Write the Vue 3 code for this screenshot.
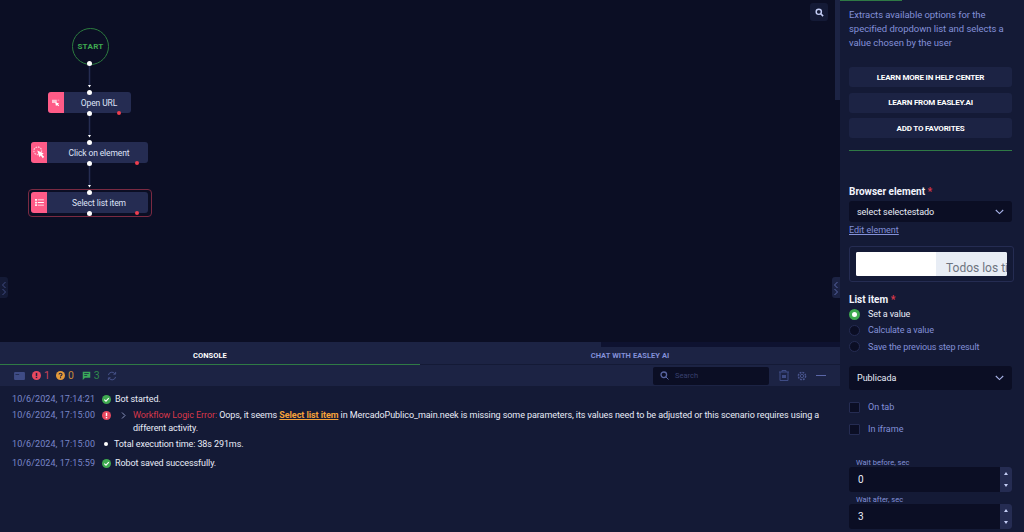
<script setup>
const rows = [
  { time: '10/6/2024, 17:14:21', icon: 'ok', text: 'Bot started.' },
  { time: '10/6/2024, 17:15:00', icon: 'err' },
  { time: '10/6/2024, 17:15:00', icon: 'dot', text: 'Total execution time: 38s 291ms.' },
  { time: '10/6/2024, 17:15:59', icon: 'ok', text: 'Robot saved successfully.' },
]
</script>

<template>
  <div class="app">
    <div class="left">
      <div class="canvas">
        <div class="vbar"></div>
        <button class="zoom-btn" aria-label="Search">
          <svg width="9" height="9" viewBox="0 0 10 10"><circle cx="4.2" cy="4.2" r="2.9" fill="none" stroke="#c4cdf5" stroke-width="1.6"/><path d="M6.4 6.4 9 9" stroke="#c4cdf5" stroke-width="1.8"/></svg>
        </button>
        <div class="handle handle-l"><svg width="6" height="14" viewBox="0 0 6 14"><path d="M4.500 1 1.500 4l3 3M1.500 8l3 3-3 3" fill="none" stroke="#3f4a80"/></svg></div>
        <div class="handle handle-r"><svg width="6" height="14" viewBox="0 0 6 14"><path d="M4.500 1 1.500 4l3 3M1.500 8l3 3-3 3" fill="none" stroke="#5a66a6"/></svg></div>

        <svg class="wires" width="180" height="230" viewBox="0 0 180 230">
          <path d="M89.500 63V86M89.500 113V135M89.500 163V185" stroke="#252c52" stroke-width="1.500"/>
          <path d="M88 85h3l-1.500 2.500zM88 135h3l-1.500 2.500zM88 185h3l-1.500 2.500z" fill="#fff"/>
        </svg>

        <div class="start">START</div>
        <i class="port" style="left:87px;top:61px"></i>

        <div class="node n1">
          <span class="node-icon">
            <svg width="8" height="8" viewBox="0 0 10 10"><path d="M0 1h6v4H0zM7 1h2v1H7z" fill="#ffc3d4"/><path d="M4 4l1 5 1.200-1.500L8 9l1-1-1.500-1.500L9 5.500z" fill="#fff"/></svg>
          </span>
          <span class="node-label">Open URL</span>
        </div>
        <i class="port" style="left:87px;top:90px"></i>
        <i class="port" style="left:87px;top:111px"></i>
        <i class="red" style="left:117px;top:111px"></i>

        <div class="node n2">
          <span class="node-icon">
            <svg width="12" height="14" viewBox="0 0 14 16"><circle cx="5.500" cy="5.500" r="4.500" fill="none" stroke="#ffc3d4" stroke-width="1.500" stroke-dasharray="2 1"/><path d="M5 5l2.500 8 1.500-2 2.500 3 1.500-1.500-2.500-2.500 2-1.500z" fill="#fff"/></svg>
          </span>
          <span class="node-label">Click on element</span>
        </div>
        <i class="port" style="left:87px;top:140px"></i>
        <i class="port" style="left:87px;top:161px"></i>
        <i class="red" style="left:135px;top:161px"></i>

        <div class="selected">
          <div class="node n3">
            <span class="node-icon">
              <svg width="9" height="7" viewBox="0 0 10 8"><path d="M0 0h2v2H0zM3 .5h7v1H3zM0 3h2v2H0zM3 3.500h7v1H3zM0 6h2v2H0zM3 6.500h7v1H3z" fill="#fff"/></svg>
            </span>
            <span class="node-label">Select list item</span>
          </div>
        </div>
        <i class="port" style="left:87px;top:190px"></i>
        <i class="port" style="left:87px;top:211px"></i>
        <i class="red" style="left:135px;top:211px"></i>
      </div>

      <div class="hbar-track"><div class="hbar"></div></div>

      <div class="tabs">
        <div class="tab active">CONSOLE</div>
        <div class="tab">CHAT WITH EASLEY AI</div>
      </div>

      <div class="toolbar">
        <svg class="t-ic" width="11" height="8" viewBox="0 0 15 11"><rect width="15" height="11" rx="1.500" fill="#3f4c85"/><rect x="2" y="3" width="5" height="1" fill="#1c2344"/></svg>
        <span class="stat red-t">
          <svg viewBox="0 0 12 12"><circle cx="6" cy="6" r="6" fill="#e8485f"/><rect x="5" y="2.500" width="2" height="4.500" fill="#1c2344"/><rect x="5" y="8" width="2" height="1.500" fill="#1c2344"/></svg>1
        </span>
        <span class="stat orange-t">
          <svg viewBox="0 0 12 12"><circle cx="6" cy="6" r="6" fill="#e39a3b"/><path d="M4 4.800C4 2.500 8 2.500 8 4.600 8 6 6 5.800 6 7.200" fill="none" stroke="#1c2344" stroke-width="1.400"/><rect x="5.300" y="8.200" width="1.500" height="1.500" fill="#1c2344"/></svg>0
        </span>
        <span class="stat green-t">
          <svg viewBox="0 0 12 12"><path d="M1 1h10v8H4l-3 3z" fill="#39a85a"/><rect x="3" y="3" width="6" height="1" fill="#1c2344"/><rect x="3" y="5.500" width="4" height="1" fill="#1c2344"/></svg>3
        </span>
        <svg class="sync" width="10" height="10" viewBox="0 0 11 11"><path d="M1.500 4.500a4 4 0 0 1 7.200-1.500M9.500 6.500A4 4 0 0 1 2.300 8" fill="none" stroke="#4a5690"/><path d="M9.500 1v2.500H7M1.500 10V7.500H4" fill="none" stroke="#4a5690"/></svg>
        <div class="search">
          <svg width="9" height="9" viewBox="0 0 9 9"><circle cx="3.800" cy="3.800" r="2.800" fill="none" stroke="#58649f" stroke-width="1.300"/><path d="M6 6l2.500 2.500" stroke="#58649f"/></svg>
          <span>Search</span>
        </div>
        <svg class="trash" width="10" height="11" viewBox="0 0 10 11"><path d="M0 2h10M3 2V.5h4V2M1 2v8.500h8V2" fill="none" stroke="#3f4c85"/><rect x="3" y="5" width="4" height="3" fill="#3f4c85"/></svg>
        <svg class="gear" width="10" height="10" viewBox="0 0 11 11"><circle cx="5.500" cy="5.500" r="1.800" fill="none" stroke="#4a5690"/><circle cx="5.500" cy="5.500" r="4" fill="none" stroke="#4a5690" stroke-width="1.600" stroke-dasharray="2 1.140"/></svg>
        <span class="dash"></span>
      </div>

      <div class="log">
        <div v-for="(r, i) in rows" :key="i" class="row" :class="'row' + i">
          <span class="time">{{ r.time }}</span>
          <svg v-if="r.icon === 'ok'" class="ric" width="9" height="9" viewBox="0 0 9 9"><circle cx="4.500" cy="4.500" r="4.500" fill="#3fa950"/><path d="M2.300 4.600 4 6.200l2.800-3" fill="none" stroke="#fff" stroke-width="1.100"/></svg>
          <svg v-else-if="r.icon === 'err'" class="ric" width="9" height="9" viewBox="0 0 9 9"><circle cx="4.500" cy="4.500" r="4.500" fill="#e8485f"/><rect x="3.800" y="1.800" width="1.400" height="3.400" fill="#fff"/><rect x="3.800" y="6" width="1.400" height="1.300" fill="#fff"/></svg>
          <span v-else class="ric dot"></span>
          <template v-if="r.icon === 'err'">
            <svg class="chev" width="5" height="7" viewBox="0 0 5 7"><path d="M1 .5 4 3.500 1 6.500" fill="none" stroke="#8a93bd"/></svg>
            <p class="msg err"><span class="err-t">Workflow Logic Error:</span> Oops, it seems <a>Select list item</a> in MercadoPublico_main.neek is missing some parameters, its values need to be adjusted or this scenario requires using a different activity.</p>
          </template>
          <p v-else class="msg">{{ r.text }}</p>
        </div>
      </div>
    </div>

    <aside class="panel">
      <div class="panel-tab"></div>
      <p class="desc">Extracts available options for the specified dropdown list and selects a value chosen by the user</p>
      <div class="btns">
        <button>LEARN MORE IN HELP CENTER</button>
        <button>LEARN FROM EASLEY.AI</button>
        <button>ADD TO FAVORITES</button>
      </div>
      <div class="rule"></div>

      <label class="lab first">Browser element <b>*</b></label>
      <div class="sel s1"><span>select selectestado</span><svg width="9" height="6" viewBox="0 0 9 6"><path d="M.8 1 4.500 4.600 8.200 1" fill="none" stroke="#a9b3e8" stroke-width="1.100"/></svg></div>
      <a class="edit">Edit element</a>
      <div class="preview"><div class="shot"><div class="shot-w"></div><div class="shot-g">Todos los ti</div></div></div>

      <label class="lab second">List item <b>*</b></label>
      <div class="radio on"><i></i><span>Set a value</span></div>
      <div class="radio"><i></i><span>Calculate a value</span></div>
      <div class="radio"><i></i><span>Save the previous step result</span></div>

      <div class="sel s2"><span>Publicada</span><svg width="9" height="6" viewBox="0 0 9 6"><path d="M.8 1 4.500 4.600 8.200 1" fill="none" stroke="#a9b3e8" stroke-width="1.100"/></svg></div>

      <div class="check c1"><i></i><span>On tab</span></div>
      <div class="check c2"><i></i><span>In iframe</span></div>

      <div class="small w1">Wait before, sec</div>
      <div class="num"><span>0</span><div class="spin"><i class="up"></i><i class="down"></i></div></div>
      <div class="small w2">Wait after, sec</div>
      <div class="num"><span>3</span><div class="spin"><i class="up"></i><i class="down"></i></div></div>
    </aside>
  </div>
</template>

<style scoped>
.app { width: 1024px; height: 532px; display: flex; overflow: hidden; background: #141a36; font-family: Roboto, "Noto Sans", sans-serif; color: #fff; }
.left { width: 840px; flex: none; display: flex; flex-direction: column; }
.canvas { height: 342px; position: relative; background: #0b0e24; flex: none; }
.vbar { position: absolute; right: 0; top: 0; width: 5px; height: 100px; background: #1c2344; }
.zoom-btn { position: absolute; left: 810px; top: 3px; width: 18px; height: 18px; border: 0; padding: 0; border-radius: 3px; background: #141a36; display: flex; align-items: center; justify-content: center; }
.handle { position: absolute; top: 277px; width: 8px; height: 21px; background: #141a36; display: flex; align-items: center; justify-content: center; }
.handle-l { left: 0; border-radius: 0 3px 3px 0; }
.handle-r { right: 0; border-radius: 3px 0 0 3px; background: #1c2344; }
.wires { position: absolute; left: 0; top: 0; }
.start { position: absolute; left: 72px; top: 28px; width: 35px; height: 35px; border: 1px solid #2c7a3f; border-radius: 50%; display: flex; align-items: center; justify-content: center; color: #3fa950; font-size: 8px; font-weight: 700; letter-spacing: .3px; }
.port { position: absolute; width: 5px; height: 5px; border-radius: 50%; background: #fff; }
.red { position: absolute; width: 4px; height: 4px; border-radius: 50%; background: #ef3e4e; }
.node { position: absolute; height: 21px; border-radius: 3px; background: #252c52; display: flex; overflow: hidden; }
.n1 { left: 48px; top: 92px; width: 83px; }
.n2 { left: 31px; top: 142px; width: 117px; }
.selected { position: absolute; left: 28px; top: 189px; width: 124px; height: 28px; border: 1px solid #7a2a42; border-radius: 4px; box-sizing: border-box; }
.selected .n3 { left: 2px; top: 2px; width: 117px; height: 21px; }
.node-icon { width: 16px; flex: none; background: #ff5b87; display: flex; align-items: center; justify-content: center; }
.node-label { flex: 1; text-align: center; font-size: 8.500px; line-height: 22px; color: #dfe3f7; padding-left: 3px; letter-spacing: -.12px; }
.hbar-track { height: 5px; background: #0e1230; flex: none; }
.hbar { width: 601px; height: 5px; background: #1c2344; }
.tabs { height: 18px; display: flex; background: #1c2344; flex: none; }
.tab { flex: 1; text-align: center; font-size: 7.500px; font-weight: 700; line-height: 18px; letter-spacing: .05px; color: #8390d8; border-bottom: 1px solid #141a36; }
.tab.active { color: #fff; border-bottom: 1px solid #2f7a45; }
.toolbar { height: 21px; background: #1c2344; display: flex; align-items: center; padding-left: 14px; flex: none; font-size: 10px; }
.t-ic { margin-right: 7px; }
.stat { display: flex; align-items: center; gap: 3px; margin-right: 6px; font-size: 10.500px; }
.stat svg { width: 9px; height: 9px; }
.orange-t { margin-right: 8px; }
.red-t { color: #c9435a; }
.orange-t { color: #c98a3a; }
.green-t { color: #2f8a4c; margin-right: 7px; }
.search { margin-left: auto; width: 116px; height: 18px; border-radius: 2px; background: #0b0e24; display: flex; align-items: center; gap: 6px; padding-left: 7px; box-sizing: border-box; color: #38406e; font-size: 7.500px; }
.trash { margin-left: 10px; }
.gear { margin-left: 8px; }
.dash { width: 10px; height: 1.500px; background: #5b67a8; margin: 0 14px 0 9px; }
.log { flex: 1; font-size: 9px; position: relative; padding: 7px 12px 0; }
.row { display: flex; align-items: flex-start; line-height: 13px; }
.row1 { margin-top: 3px; }
.row2 { margin-top: 3px; }
.row3 { margin-top: 6px; }
.time { width: 90px; flex: none; color: #7986c9; letter-spacing: .08px; }
.ric { flex: none; margin: 2px 4px 0 0; }
.dot { width: 4px; height: 4px; border-radius: 50%; background: #fff; margin: 4px 6px 0 2px; }
.msg { margin: 0; color: #e9ecf8; letter-spacing: -.1px; }
.chev { flex: none; margin: 3px 7px 0 6px; }
.err { width: 692px; letter-spacing: -.08px; }
.err-t { color: #d9384a; }
.err a { color: #f5a23a; font-weight: 700; text-decoration: underline; }
.panel { width: 184px; flex: none; position: relative; padding: 8px 12px 0 9px; box-sizing: border-box; background: #141a36; }
.panel-tab { position: absolute; left: 0; top: 0; width: 62px; height: 1px; background: #2f7a45; }
.desc { margin: 0; font-size: 9.500px; line-height: 14px; color: #8390d8; letter-spacing: -.05px; }
.btns { margin-top: 17px; display: flex; flex-direction: column; gap: 5.500px; }
.btns button { height: 20px; border: 0; border-radius: 3px; background: #1c2344; color: #fff; font: 700 8px Roboto, sans-serif; letter-spacing: -.2px; padding: 0; }
.rule { height: 1px; background: #2f7a45; margin-top: 12px; }
.lab { display: block; font-size: 10px; font-weight: 700; line-height: 14px; color: #f2f4fc; }
.lab b { color: #d9384a; }
.first { margin-top: 34px; }
.sel { display: flex; align-items: center; justify-content: space-between; padding: 0 8px; background: #0b0e24; border-radius: 3px; font-size: 9px; color: #e9ecf8; letter-spacing: -.03px; }
.s1 { height: 21px; margin-top: 2px; }
.s2 { height: 24px; margin-top: 11px; }
.edit { display: block; margin-top: 2px; font-size: 9px; line-height: 13px; color: #8390d8; text-decoration: underline; }
.preview { margin: 9px -2px 0 0; height: 36px; border: 1px solid #252c52; border-radius: 3px; box-sizing: border-box; padding: 5px 6px; }
.shot { height: 24px; border-radius: 2px; overflow: hidden; display: flex; background: #fff; }
.shot-w { width: 80px; flex: none; background: #fff; }
.shot-g { flex: 1; min-width: 0; background: #e8edf5; color: #6e7480; font-size: 12px; line-height: 32px; padding-left: 10px; white-space: nowrap; overflow: hidden; }
.second { margin-top: 12px; line-height: 12px; }
.radio { height: 16.300px; display: flex; align-items: center; gap: 8px; font-size: 9px; color: #8390d8; letter-spacing: -.12px; }
.radio i { width: 9px; height: 9px; border-radius: 50%; background: #0b0e24; border: 1px solid #252c52; }
.radio.on span { color: #e9ecf8; }
.radio.on i { background: #fff; border: 3px solid #3fa950; width: 5px; height: 5px; }
.check { display: flex; align-items: center; gap: 8px; font-size: 9px; line-height: 11px; color: #8390d8; }
.check i { width: 9px; height: 9px; background: #0b0e24; border: 1px solid #252c52; border-radius: 1px; }
.c1 { margin-top: 12px; }
.c2 { margin-top: 11px; }
.small { font-size: 7.500px; line-height: 9px; color: #8390d8; padding-left: 7px; }
.w1 { margin-top: 23px; }
.w2 { margin-top: 3px; }
.num { height: 25px; background: #0b0e24; border-radius: 3px; display: flex; align-items: center; justify-content: space-between; padding-left: 9px; overflow: hidden; font-size: 10px; color: #e9ecf8; }
.spin { width: 12px; height: 100%; background: #252c52; display: flex; flex-direction: column; align-items: center; justify-content: space-between; padding: 5px 0; box-sizing: border-box; }
.spin i { width: 0; height: 0; border-left: 2.500px solid transparent; border-right: 2.500px solid transparent; }
.up { border-bottom: 3px solid #c4cdf5; }
.down { border-top: 3px solid #c4cdf5; }
</style>

<style>
html, body { margin: 0; background: #141a36; }
</style>
